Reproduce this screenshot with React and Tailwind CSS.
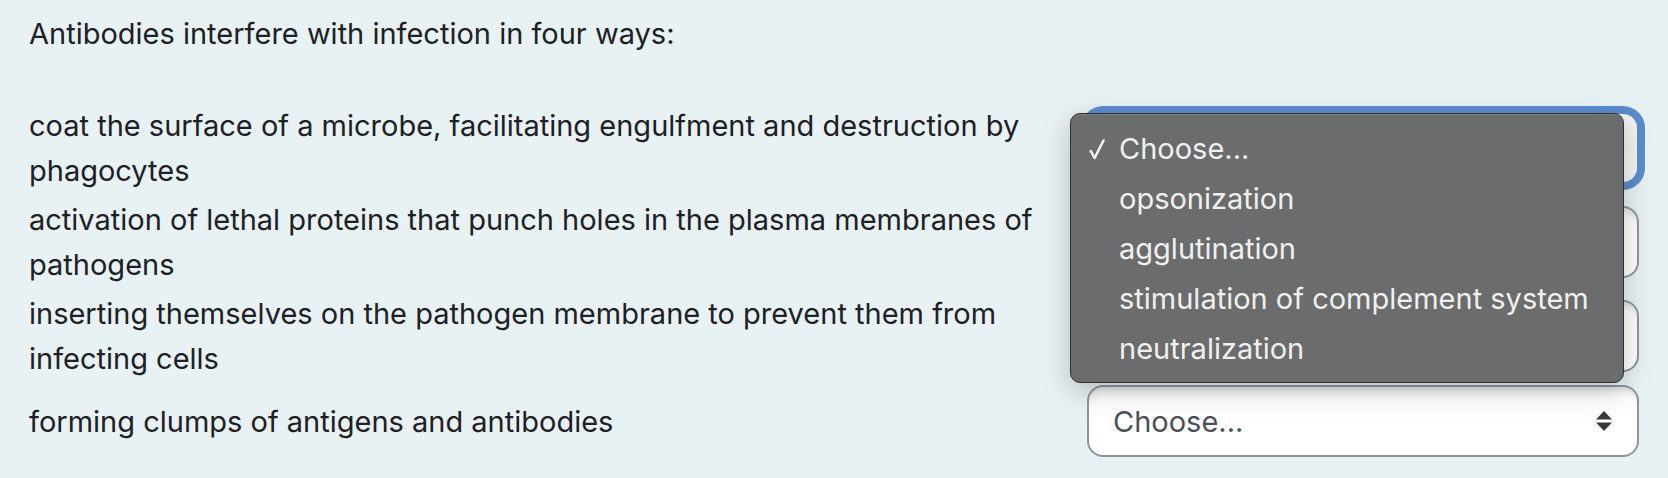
import React from "react";

const rows = [
  { text: "coat the surface of a microbe, facilitating engulfment and destruction by phagocytes", focused: true, covered: true },
  { text: "activation of lethal proteins that punch holes in the plasma membranes of pathogens", covered: true },
  { text: "inserting themselves on the pathogen membrane to prevent them from infecting cells", covered: true },
  { text: "forming clumps of antigens and antibodies" },
];

const options = [
  "Choose...",
  "opsonization",
  "agglutination",
  "stimulation of complement system",
  "neutralization",
];

const Arrows = () => (
  <svg width="18" height="20" viewBox="0 0 18 20" className="shrink-0">
    <polygon points="1,8.5 9,0 17,8.5" fill="#343a40" />
    <polygon points="1,11.5 17,11.5 9,20" fill="#343a40" />
  </svg>
);

const Check = () => (
  <svg width="16" height="22" viewBox="0 0 16 22" className="shrink-0">
    <path d="M1.8 13 L5.6 20 L14.5 2.5" fill="none" stroke="#f2f2f2" strokeWidth="2.6" strokeLinecap="round" strokeLinejoin="round" />
  </svg>
);

const Select = ({ focused, covered }) => (
  <div
    className={
      focused
        ? "h-[72px] w-[552px] rounded-[16px] border-2 border-[#5a8dcc] bg-[#f3f3f3] shadow-[0_0_0_6px_#5a8dcc] flex items-center justify-between pl-[24px] pr-[24px]"
        : "h-[72px] w-[552px] rounded-[16px] border-2 border-[#8f959e] bg-white shadow-[inset_0_8px_10px_-6px_rgba(0,0,0,0.18)] flex items-center justify-between pl-[24px] pr-[24px]"
    }
  >
    {/* texts under the open menu are not visible */}
    <span className={covered ? "invisible text-[#495057] text-[29px] leading-none" : "text-[#495057] text-[29px] leading-none"}>
      Choose...
    </span>
    <Arrows />
  </div>
);

export default function App() {
  return (
    <div className="w-full h-[478px] overflow-hidden bg-[#e8f1f4] text-[#1d2125] font-['Inter','Noto_Sans',sans-serif]">
      <div className="px-[29px] pt-[11px]">
        <p className="text-[29px] leading-[45px]">Antibodies interfere with infection in four ways:</p>

        <div className="relative mt-[45px]">
          {rows.map((r, i) => (
            <div key={i} className="grid grid-cols-[1058px_552px] items-center py-[2px]">
              <div className="text-[29px] leading-[45px] pr-[20px]">{r.text}</div>
              <Select focused={r.focused} covered={r.covered} />
            </div>
          ))}

          {/* open native dropdown menu */}
          <div className="absolute left-[1041px] top-[12px] w-[554px] h-[270px] rounded-[10px] border border-[#2f2f2f] bg-[#6b6c6d] shadow-[0_8px_28px_rgba(0,0,0,0.22),inset_0_1px_0_rgba(255,255,255,0.12)] pt-[10px] pb-[9px]">
            {options.map((o, i) => (
              <div key={o} className="flex items-center h-[50px] text-[29px] text-[#f0f0f0]">
                <div className="w-[48px] pl-[18px] flex items-center">{i === 0 && <Check />}</div>
                <span className="leading-[50px]">{o}</span>
              </div>
            ))}
          </div>
        </div>
      </div>
    </div>
  );
}
